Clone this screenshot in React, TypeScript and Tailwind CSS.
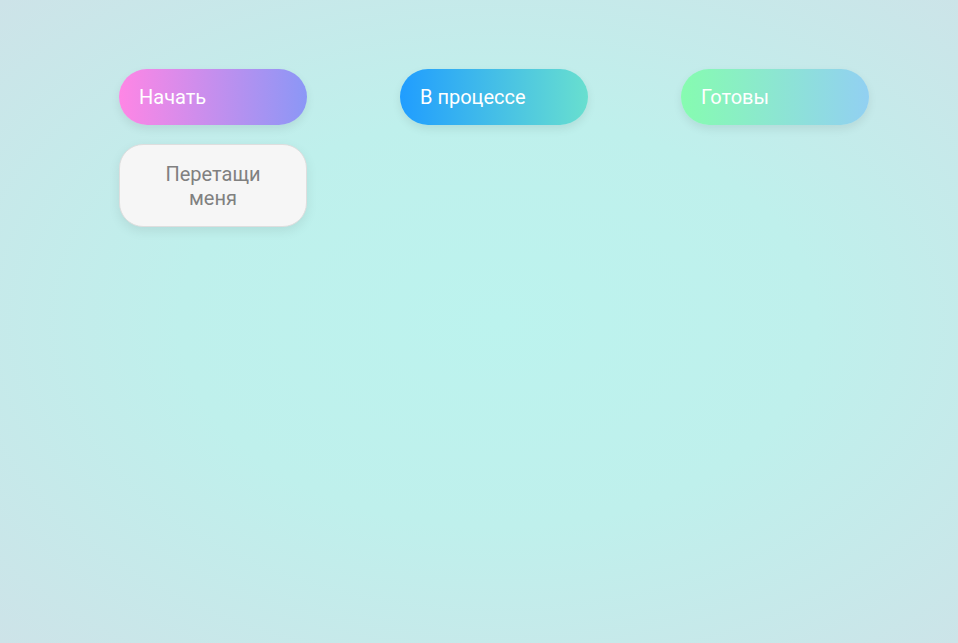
import React from "react";

const columns = [
  { title: "Начать", grad: "bg-[linear-gradient(90deg,#ff86e5,#8b97f6)]" },
  { title: "В процессе", grad: "bg-[linear-gradient(90deg,#209dff,#68dfcf)]" },
  { title: "Готовы", grad: "bg-[linear-gradient(90deg,#86fcb0,#92d0f2)]" },
];

export default function App() {
  return (
    <div className="h-[643px] w-[958px] overflow-hidden bg-[radial-gradient(ellipse_at_52%_50%,#bcf3ee_0%,#bff0ec_45%,#cde3e8_100%)] font-['Roboto','Liberation_Sans',sans-serif]">
      <div className="flex gap-[93px] pl-[119px] pt-[69px]">
        {columns.map((c, i) => (
          <div key={c.title} className="flex w-[188px] flex-col gap-[20px]">
            <div
              className={`flex h-[56px] items-center rounded-[28px] pl-5 text-[20px] text-white shadow-[0_4px_10px_rgba(0,0,0,0.08)] ${c.grad}`}
            >
              {c.title}
            </div>
            {i === 0 && (
              <div className="-mt-px flex h-[83px] items-center justify-center rounded-[24px] border border-[#dedede] bg-[#f6f6f6] px-8 text-center text-[20px] leading-6 text-[#808080] shadow-[0_4px_12px_rgba(0,0,0,0.08)]">
                Перетащи меня
              </div>
            )}
          </div>
        ))}
      </div>
    </div>
  );
}
